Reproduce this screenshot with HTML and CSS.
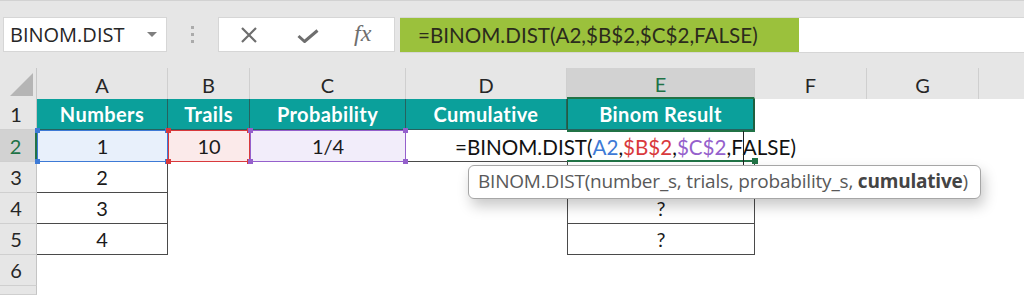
FILE: index.html
```html
<!DOCTYPE html>
<html>
<head>
<meta charset="utf-8">
<link rel="stylesheet" href="styles.css">
</head>
<body>
<div class="toolbar">
  <div class="namebox"><span class="nb-text">BINOM.DIST</span><span class="nb-caret"></span></div>
  <div class="grip"><i></i><i></i><i></i></div>
  <div class="fxbtns">
    <svg class="ic-x" width="20" height="16" viewBox="0 0 20 16"><path d="M3 1 L17 15 M17 1 L3 15" stroke="#6e6e6e" stroke-width="2.2" fill="none"/></svg>
    <svg class="ic-ok" width="22" height="14" viewBox="0 0 22 14"><path d="M1.5 7 L7.5 12.5 L20.5 1.5" stroke="#6e6e6e" stroke-width="3" fill="none" stroke-linejoin="round"/></svg>
    <span class="ic-fx">fx</span>
  </div>
  <div class="formula"><div class="formula-hl">=BINOM.DIST(A2,$B$2,$C$2,FALSE)</div></div>
</div>
<div class="sheet">
  <div class="corner" style="grid-row:1;grid-column:1"><span class="tri"></span></div>
  <div class="ch" style="grid-row:1;grid-column:2">A</div>
  <div class="ch" style="grid-row:1;grid-column:3">B</div>
  <div class="ch" style="grid-row:1;grid-column:4">C</div>
  <div class="ch" style="grid-row:1;grid-column:5">D</div>
  <div class="ch ch-active" style="grid-row:1;grid-column:6">E</div>
  <div class="ch" style="grid-row:1;grid-column:7">F</div>
  <div class="ch" style="grid-row:1;grid-column:8">G</div>
  <div class="ch ch-last" style="grid-row:1;grid-column:9"></div>

  <div class="rh" style="grid-row:2;grid-column:1">1</div>
  <div class="rh rh-active" style="grid-row:3;grid-column:1">2</div>
  <div class="rh" style="grid-row:4;grid-column:1">3</div>
  <div class="rh" style="grid-row:5;grid-column:1">4</div>
  <div class="rh" style="grid-row:6;grid-column:1">5</div>
  <div class="rh" style="grid-row:7;grid-column:1">6</div>
  <div class="rh" style="grid-row:8;grid-column:1"></div>

  <div class="th" style="grid-row:2;grid-column:2">Numbers</div>
  <div class="th" style="grid-row:2;grid-column:3">Trails</div>
  <div class="th" style="grid-row:2;grid-column:4">Probability</div>
  <div class="th" style="grid-row:2;grid-column:5">Cumulative</div>
  <div class="th th-e" style="grid-row:2;grid-column:6">Binom Result</div>

  <div class="ref ref-a" style="grid-row:3;grid-column:2">1<b class="h tl"></b><b class="h tr"></b><b class="h bl"></b><b class="h br"></b></div>
  <div class="ref ref-b" style="grid-row:3;grid-column:3">10<b class="h tl"></b><b class="h tr"></b><b class="h bl"></b><b class="h br"></b></div>
  <div class="ref ref-c" style="grid-row:3;grid-column:4">1/4<b class="h tl"></b><b class="h tr"></b><b class="h bl"></b><b class="h br"></b></div>
  <div class="d2" style="grid-row:3;grid-column:5"></div>
  <div class="e2" style="grid-row:3;grid-column:6"><b class="fill"></b></div>
  <div class="edit" style="grid-row:3;grid-column:5 / 9"><span>=BINOM.DIST(<span class="c-a">A2</span>,<span class="c-b">$B$2</span>,<span class="c-c">$C$2</span>,F<span class="cursor"></span>ALSE)</span></div>

  <div class="td" style="grid-row:4;grid-column:2">2</div>
  <div class="td" style="grid-row:5;grid-column:2">3</div>
  <div class="td" style="grid-row:6;grid-column:2">4</div>
  <div class="td td-e" style="grid-row:4;grid-column:6"></div>
  <div class="td td-e" style="grid-row:5;grid-column:6">?</div>
  <div class="td td-e" style="grid-row:6;grid-column:6">?</div>

  <p class="tip">BINOM.DIST(number_s, trials, probability_s, <b>cumulative</b>)</p>
</div>
</body>
</html>
```
FILE: styles.css
```css
* { box-sizing: border-box; }
html, body { margin: 0; padding: 0; }
body {
  width: 1024px;
  height: 295px;
  overflow: hidden;
  background: #ffffff;
  font-family: "Lato", "Liberation Sans", sans-serif;
}
.toolbar {
  height: 68px;
  background: #e6e6e6;
  border-top: 1px solid #d2d2d2;
  display: flex;
  align-items: flex-start;
  padding-top: 16px;
}
.namebox {
  margin-left: 3px;
  width: 164px;
  height: 35px;
  background: #fff;
  border: 1px solid #d6d6d6;
  display: flex;
  align-items: center;
  justify-content: space-between;
  padding: 0 9px 0 6px;
  font-family: "Open Sans", "Noto Sans", sans-serif;
  font-size: 20px;
  color: #262626;
}
.nb-caret {
  width: 0; height: 0;
  border-left: 5px solid transparent;
  border-right: 5px solid transparent;
  border-top: 5px solid #7f7f7f;
}
.grip {
  width: 51px;
  height: 35px;
  display: flex;
  flex-direction: column;
  align-items: center;
  justify-content: center;
  gap: 4px;
}
.grip i { display: block; width: 3px; height: 3px; background: #ababab; }
.fxbtns {
  width: 177px;
  height: 35px;
  background: #fff;
  border: 1px solid #d6d6d6;
  display: flex;
  align-items: center;
  padding-left: 20px;
}
.ic-x { margin-right: 38px; }
.ic-ok { margin-right: 35px; margin-top: 3px; }
.ic-fx {
  font-family: "Liberation Serif", serif;
  font-style: italic;
  font-size: 24px;
  color: #6e6e6e;
  margin-top: -3px;
}
.formula {
  flex: 1;
  margin-left: 5px;
  height: 36px;
  background: #fff;
  border-top: 1px solid #d6d6d6;
  border-bottom: 1px solid #d6d6d6;
}
.formula-hl {
  width: 399px;
  height: 100%;
  background: #9bc13c;
  color: #2b2b1c;
  font-size: 20.6px;
  line-height: 34px;
  padding-left: 18px;
  white-space: nowrap;
}
.sheet {
  position: relative;
  height: 227px;
  display: grid;
  grid-template-columns: 37px 131px 82px 156px 161px 188px 112px 112px 1fr;
  grid-template-rows: 31px 31px 32px 31px 31px 31px 31px 9px;
  font-size: 20px;
  color: #1a1a1a;
}
.sheet > div { display: flex; align-items: center; justify-content: center; }
.corner {
  background: #e6e6e6;
  border-right: 1px solid #c8c8c8;
  position: relative;
}
.tri {
  position: absolute;
  right: 3px; bottom: 3px;
  width: 0; height: 0;
  border-left: 23px solid transparent;
  border-bottom: 23px solid #b5b5b5;
}
.ch {
  background: #e6e6e6;
  border-right: 1px solid #cfcfcf;
  color: #262626;
  padding-top: 3px;
}
.ch-last { border-right: none; }
.ch-active {
  background: #d2d2d2;
  color: #217346;
  border-bottom: 2px solid #217346;
}
.rh {
  background: #e6e6e6;
  border-right: 1px solid #c4c4c4;
  border-bottom: 1px solid #cfcfcf;
  color: #262626;
  padding-right: 4px;
}
.rh-active {
  background: #d2d2d2;
  color: #217346;
  border-right: 2px solid #217346;
}
.th {
  background: #0ba09b;
  color: #fff;
  font-weight: 700;
  letter-spacing: 0.4px;
  border-right: 1px solid #26625f;
  border-bottom: 1px solid #26625f;
}
.th-e {
  border-left: 1px solid #1f5f3f;
  border-right: 2px solid #1f5f3f;
}
.ref { position: relative; }
.ref-a { background: #e8f0fb; border: 1.5px solid #3d7ad6; }
.ref-b { background: #fbeaea; border: 1.5px solid #d9393c; }
.ref-c { background: #f2edfa; border: 1.5px solid #9560cc; }
.h { position: absolute; width: 5px; height: 5px; }
.ref-a .h { background: #3d7ad6; }
.ref-b .h { background: #d9393c; }
.ref-c .h { background: #9560cc; }
.tl { left: -3px; top: -3px; }
.tr { right: -3px; top: -3px; }
.bl { left: -3px; bottom: -3px; }
.br { right: -3px; bottom: -3px; }
.d2 { border-bottom: 1px solid #4a4a4a; }
.e2 {
  position: relative;
  border-top: 2px solid #217346;
  border-bottom: 2px solid #217346;
}
.fill {
  position: absolute;
  right: -3px; bottom: -4px;
  width: 6px; height: 6px;
  background: #217346;
}
.sheet > .edit {
  justify-content: flex-start;
  padding-left: 49px;
  padding-top: 2px;
  white-space: nowrap;
  color: #111;
  font-size: 20.6px;
  z-index: 2;
}
.c-a { color: #3d7ad6; }
.c-b { color: #d9393c; }
.c-c { color: #9560cc; }
.cursor {
  display: inline-block;
  position: relative;
  width: 0;
  height: 0;
}
.cursor::after {
  content: "";
  position: absolute;
  left: 0;
  top: -24px;
  width: 1px;
  height: 34px;
  background: #222;
}
.td {
  border-right: 1px solid #4a4a4a;
  border-bottom: 1px solid #4a4a4a;
}
.td-e { border-left: 1px solid #4a4a4a; }
.tip {
  position: absolute;
  margin: 0;
  left: 468px;
  top: 97px;
  width: 513px;
  height: 34px;
  background: #fff;
  border: 1px solid #a6a6a6;
  border-radius: 6px;
  box-shadow: 3px 7px 14px rgba(0, 0, 0, 0.22);
  font-family: "Open Sans", "Noto Sans", sans-serif;
  font-size: 19px;
  letter-spacing: -0.2px;
  color: #595959;
  z-index: 5;
  white-space: nowrap;
  padding-left: 9px;
  line-height: 31px;
}
.tip b { color: #444; font-weight: 700; }
```
